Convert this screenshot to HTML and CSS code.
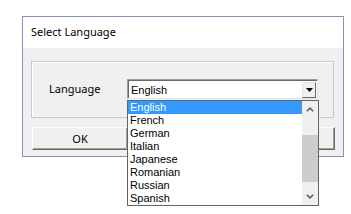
FILE: index.html
```html
<!DOCTYPE html>
<html lang="en">
<head>
    <meta charset="UTF-8">
    <title>Select Language</title>
    <link rel="stylesheet" href="styles.css">
</head>
<body>
    <div id="dialog">
        <div id="title">Select Language</div>
        <div id="content">
            <div id="group">
                <span id="label">Language</span>
                <div id="combo">
                    <span id="comboText">English</span>
                    <span id="dropButton">
                        <svg width="7" height="4" viewBox="0 0 7 4"><path d="M0 0H7L3.5 4Z" fill="#000"/></svg>
                    </span>
                    <div id="list">
                        <div class="items">
                            <div class="item selected">English</div>
                            <div class="item">French</div>
                            <div class="item">German</div>
                            <div class="item">Italian</div>
                            <div class="item">Japanese</div>
                            <div class="item">Romanian</div>
                            <div class="item">Russian</div>
                            <div class="item">Spanish</div>
                        </div>
                        <div id="scrollbar">
                            <span class="arrow">
                                <svg width="8" height="5" viewBox="0 0 8 5"><path d="M0.8 4.3L4 1.2L7.2 4.3" fill="none" stroke="#606060" stroke-width="1.6"/></svg>
                            </span>
                            <span id="track"><span id="thumb"></span></span>
                            <span class="arrow">
                                <svg width="8" height="5" viewBox="0 0 8 5"><path d="M0.8 0.7L4 3.8L7.2 0.7" fill="none" stroke="#606060" stroke-width="1.6"/></svg>
                            </span>
                        </div>
                    </div>
                </div>
            </div>
            <div id="buttons">
                <button>OK</button>
                <button>Cancel</button>
            </div>
        </div>
    </div>
</body>
</html>
```

FILE: styles.css
```css
html, body {
	min-height: 214px;
}

body {
	background: white;
	margin: 0;
	font-family: "Noto Sans", sans-serif;
}

#dialog {
	margin: 16px 0 0 22px;
	width: 320px;
	height: 139px;
	border: 1px solid #8094b4;
	background: #f0f0f0;
	display: flex;
	flex-direction: column;
}

#title {
	background: white;
	height: 31px;
	line-height: 30px;
	padding-left: 8px;
	font-size: 11px;
	color: #000;
}

#content {
	padding: 13px 9px 0 8px;
}

#group {
	border: 1px solid #c8c8c8;
	box-shadow: inset 1px 1px 0 white;
	display: flex;
	align-items: flex-start;
	padding-top: 17px;
	box-sizing: border-box;
	height: 57px;
}

#label {
	width: 78px;
	padding-left: 17px;
	font-size: 11px;
	line-height: 20px;
	color: #000;
}

#combo {
	position: relative;
	width: 191px;
	height: 20px;
	box-sizing: border-box;
	background: white;
	border-top: 1px solid #a0a0a0;
	border-left: 1px solid #a0a0a0;
	border-right: 1px solid #e3e3e3;
	border-bottom: 1px solid #e3e3e3;
	box-shadow: inset 1px 1px 0 #696969;
	display: flex;
	align-items: center;
	font-family: "Liberation Sans", sans-serif;
	font-size: 11px;
}

#comboText {
	flex: 1;
	padding-left: 3px;
	padding-top: 1px;
}

#dropButton {
	width: 14px;
	height: 16px;
	margin-right: 1px;
	margin-top: 1px;
	box-sizing: border-box;
	background: #f0f0f0;
	border-top: 1px solid #e3e3e3;
	border-left: 1px solid #e3e3e3;
	border-right: 1px solid #696969;
	border-bottom: 1px solid #696969;
	display: flex;
	align-items: center;
	justify-content: center;
}

#list {
	position: absolute;
	left: -1px;
	top: 20px;
	width: 192px;
	height: 106px;
	box-sizing: border-box;
	border: 1px solid #646464;
	background: white;
	display: flex;
	z-index: 2;
}

.items {
	flex: 1;
}

.item {
	height: 13px;
	line-height: 13px;
	padding-left: 2px;
	color: #000;
}

.item.selected {
	background: #3399ff;
	color: white;
}

#scrollbar {
	width: 16px;
	background: #f0f0f0;
	display: flex;
	flex-direction: column;
}

.arrow {
	height: 17px;
	display: flex;
	align-items: center;
	justify-content: center;
}

#track {
	flex: 1;
	padding-top: 17px;
}

#thumb {
	display: block;
	height: 47px;
	background: #cdcdcd;
}

#buttons {
	display: flex;
	justify-content: space-between;
	margin: 9px -1px 0 1px;
}

button {
	width: 96px;
	height: 23px;
	font-family: "Noto Sans", sans-serif;
	font-size: 11px;
	color: #000;
	background: #f0f0f0;
	border-top: 1px solid white;
	border-left: 1px solid white;
	border-right: 1px solid #696969;
	border-bottom: 1px solid #696969;
	box-shadow: inset -1px -1px 0 #a0a0a0;
	padding: 0;
}
```
